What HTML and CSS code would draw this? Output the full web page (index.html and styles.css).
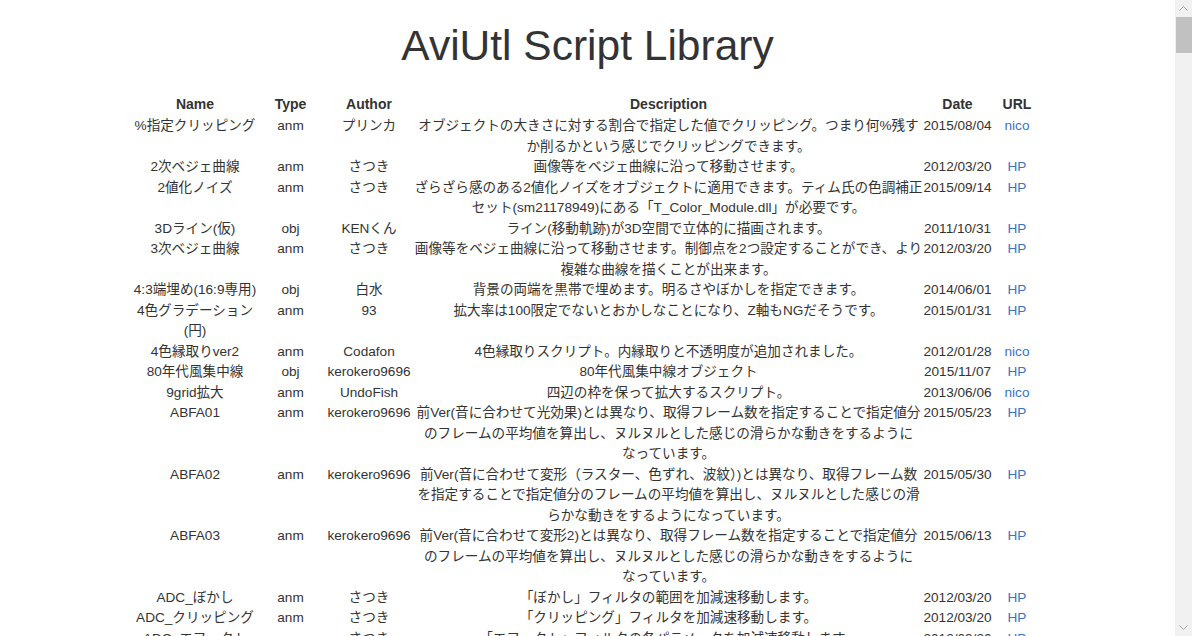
FILE: index.html
```html
<!DOCTYPE html>
<html lang="ja">
<head>
<meta charset="utf-8">
<title>AviUtl Script Library</title>
<link rel="stylesheet" href="styles.css">
</head>
<body>
<main class="page">
<h1 class="title">AviUtl Script Library</h1>
<table class="lib">
  <colgroup>
    <col class="c-name"><col class="c-type"><col class="c-author"><col class="c-desc"><col class="c-date"><col class="c-url">
  </colgroup>
  <thead>
    <tr><th>Name</th><th>Type</th><th>Author</th><th>Description</th><th>Date</th><th>URL</th></tr>
  </thead>
  <tbody>
    <tr><td>%指定クリッピング</td><td>anm</td><td>プリンカ</td><td class="d">オブジェクトの大きさに対する割合で指定した値でクリッピング。つまり何%残す<br>か削るかという感じでクリッピングできます。</td><td>2015/08/04</td><td><a href="#">nico</a></td></tr>
    <tr><td>2次ベジェ曲線</td><td>anm</td><td>さつき</td><td class="d">画像等をベジェ曲線に沿って移動させます。</td><td>2012/03/20</td><td><a href="#">HP</a></td></tr>
    <tr><td>2値化ノイズ</td><td>anm</td><td>さつき</td><td class="d">ざらざら感のある2値化ノイズをオブジェクトに適用できます。ティム氏の色調補正<br>セット(sm21178949)にある「T_Color_Module.dll」が必要です。</td><td>2015/09/14</td><td><a href="#">HP</a></td></tr>
    <tr><td>3Dライン(仮)</td><td>obj</td><td>KENくん</td><td class="d">ライン(移動軌跡)が3D空間で立体的に描画されます。</td><td>2011/10/31</td><td><a href="#">HP</a></td></tr>
    <tr><td>3次ベジェ曲線</td><td>anm</td><td>さつき</td><td class="d">画像等をベジェ曲線に沿って移動させます。制御点を2つ設定することができ、より<br>複雑な曲線を描くことが出来ます。</td><td>2012/03/20</td><td><a href="#">HP</a></td></tr>
    <tr><td>4:3端埋め(16:9専用)</td><td>obj</td><td>白水</td><td class="d">背景の両端を黒帯で埋めます。明るさやぼかしを指定できます。</td><td>2014/06/01</td><td><a href="#">HP</a></td></tr>
    <tr><td>4色グラデーション<br>(円)</td><td>anm</td><td>93</td><td class="d">拡大率は100限定でないとおかしなことになり、Z軸もNGだそうです。</td><td>2015/01/31</td><td><a href="#">HP</a></td></tr>
    <tr><td>4色縁取りver2</td><td>anm</td><td>Codafon</td><td class="d">4色縁取りスクリプト。内縁取りと不透明度が追加されました。</td><td>2012/01/28</td><td><a href="#">nico</a></td></tr>
    <tr><td>80年代風集中線</td><td>obj</td><td>kerokero9696</td><td class="d">80年代風集中線オブジェクト</td><td>2015/11/07</td><td><a href="#">HP</a></td></tr>
    <tr><td>9grid拡大</td><td>anm</td><td>UndoFish</td><td class="d">四辺の枠を保って拡大するスクリプト。</td><td>2013/06/06</td><td><a href="#">nico</a></td></tr>
    <tr><td>ABFA01</td><td>anm</td><td>kerokero9696</td><td class="d">前Ver(音に合わせて光効果)とは異なり、取得フレーム数を指定することで指定値分<br>のフレームの平均値を算出し、ヌルヌルとした感じの滑らかな動きをするように<br>なっています。</td><td>2015/05/23</td><td><a href="#">HP</a></td></tr>
    <tr><td>ABFA02</td><td>anm</td><td>kerokero9696</td><td class="d">前Ver(音に合わせて変形（ラスター、色ずれ、波紋）)とは異なり、取得フレーム数<br>を指定することで指定値分のフレームの平均値を算出し、ヌルヌルとした感じの滑<br>らかな動きをするようになっています。</td><td>2015/05/30</td><td><a href="#">HP</a></td></tr>
    <tr><td>ABFA03</td><td>anm</td><td>kerokero9696</td><td class="d">前Ver(音に合わせて変形2)とは異なり、取得フレーム数を指定することで指定値分<br>のフレームの平均値を算出し、ヌルヌルとした感じの滑らかな動きをするように<br>なっています。</td><td>2015/06/13</td><td><a href="#">HP</a></td></tr>
    <tr><td>ADC_ぼかし</td><td>anm</td><td>さつき</td><td class="d">「ぼかし」フィルタの範囲を加減速移動します。</td><td>2012/03/20</td><td><a href="#">HP</a></td></tr>
    <tr><td>ADC_クリッピング</td><td>anm</td><td>さつき</td><td class="d">「クリッピング」フィルタを加減速移動します。</td><td>2012/03/20</td><td><a href="#">HP</a></td></tr>
    <tr><td>ADC_エフェクト</td><td>anm</td><td>さつき</td><td class="d">「エフェクト」フィルタの各パラメータを加減速移動します。</td><td>2012/03/20</td><td><a href="#">HP</a></td></tr>
    <tr><td>ADC_拡大率</td><td>anm</td><td>さつき</td><td class="d">拡大率を加減速移動します。</td><td>2012/03/20</td><td><a href="#">HP</a></td></tr>
  </tbody>
</table>
</main>
<div class="scrollbar" aria-hidden="true">
  <svg class="sb-arrow" width="17" height="17" viewBox="0 0 17 17"><path d="M4.5 10.5 L8.5 6.5 L12.5 10.5" fill="none" stroke="#a3a3a3" stroke-width="1"/></svg>
  <div class="sb-thumb"></div>
  <div class="sb-fill"></div>
  <svg class="sb-arrow" width="17" height="17" viewBox="0 0 17 17"><path d="M4.5 6.5 L8.5 10.5 L12.5 6.5" fill="none" stroke="#a3a3a3" stroke-width="1"/></svg>
</div>
</body>
</html>
```

FILE: styles.css
```css
html, body {
  margin: 0;
  padding: 0;
  background: #fff;
}
body {
  font-family: "Liberation Sans", Arial, "Noto Sans CJK JP", sans-serif;
  color: #333;
  font-size: 13.6px;
  padding-right: 17px;
}
.page {
  display: block;
}
.title {
  margin: 23px 0 25px;
  font-size: 42.5px;
  font-weight: normal;
  line-height: 46px;
  text-align: center;
  color: #333;
}
.lib {
  table-layout: fixed;
  width: 909px;
  margin: 0 auto;
  border-collapse: collapse;
  border-spacing: 0;
}
.c-name { width: 124px; }
.c-type { width: 67px; }
.c-author { width: 90px; }
.c-desc { width: 509px; }
.c-date { width: 69px; }
.c-url { width: 50px; }
.lib th, .lib td {
  padding: 0;
  text-align: center;
  vertical-align: top;
  line-height: 20.5px;
}
.lib th {
  font-weight: bold;
  font-size: 14px;
  padding-bottom: 1.5px;
}
.lib td.d {
  white-space: nowrap;
}
.lib a {
  color: #3a74c4;
  text-decoration: none;
}
.scrollbar {
  position: fixed;
  top: 0;
  right: 0;
  width: 17px;
  height: 100%;
  background: #f1f1f1;
  display: flex;
  flex-direction: column;
}
.sb-arrow {
  display: block;
  flex: none;
}
.sb-thumb {
  flex: none;
  height: 36px;
  margin: 0 0 0 1px;
  background: #c1c1c1;
}
.sb-fill {
  flex: 1;
}
```
